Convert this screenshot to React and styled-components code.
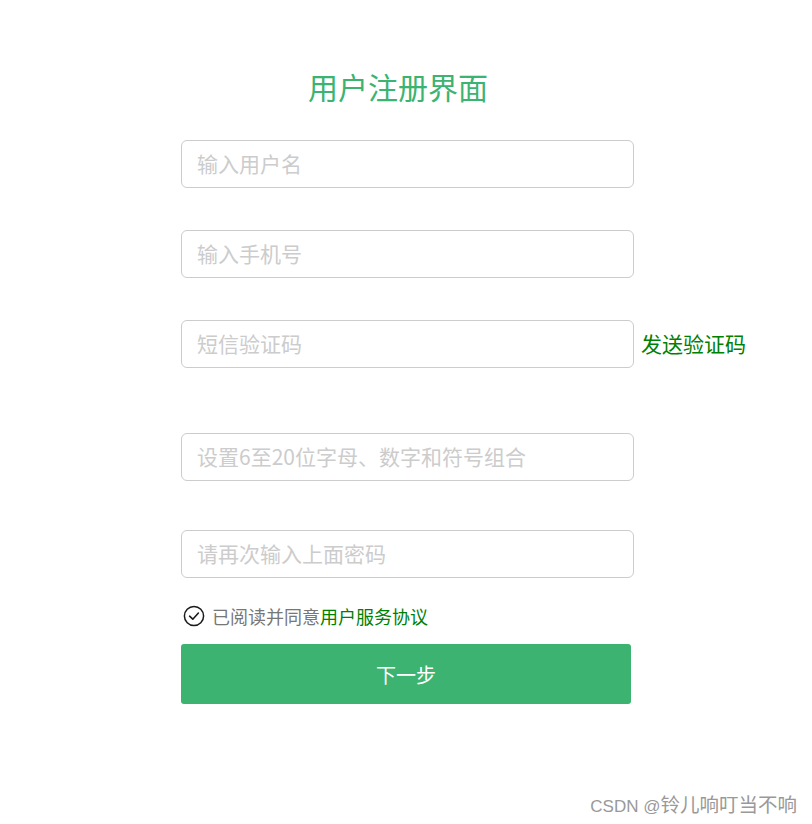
import React from "react";
import styled, { createGlobalStyle } from "styled-components";

const Global = createGlobalStyle`
  html, body { margin: 0; padding: 0; background: #fff; }
  body { font-family: "Noto Sans CJK SC", "Liberation Sans", sans-serif; }
  * { box-sizing: border-box; }
`;

const Page = styled.div`
  position: relative;
  width: 812px;
  height: 824px;
  padding-left: 181px;
  padding-top: 71px;
`;

const Form = styled.div`
  display: flex;
  flex-direction: column;
  width: 453px;
`;

const Title = styled.h1`
  margin: 0 19px 0 0;
  font-size: 30px;
  line-height: 30px;
  font-weight: 400;
  color: #3cb371;
  text-align: center;
`;

const Row = styled.div`
  display: flex;
  align-items: center;
  gap: 7px;
  margin-top: ${(p) => p.$gap}px;
  width: 600px;
`;

const Input = styled.input`
  flex: none;
  width: 453px;
  height: 48px;
  border: 1px solid #cccccc;
  border-radius: 6px;
  padding: 0 15px 3px;
  font-family: inherit;
  font-size: 21px;
  color: #333;
  outline: none;
  &::placeholder { color: #cccccc; }
`;

const SendLink = styled.a`
  font-size: 21px;
  color: #008000;
  text-decoration: none;
  white-space: nowrap;
  line-height: 24px;
  margin-bottom: 2px;
`;

const Agree = styled.label`
  display: flex;
  align-items: center;
  gap: 7px;
  margin-top: 26px;
  padding-left: 2px;
  height: 24px;
  font-size: 18px;
  color: #777;
`;

const AgreeLink = styled.span`
  color: #008000;
`;

const Button = styled.button`
  margin-top: 16px;
  width: 450px;
  height: 60px;
  border: none;
  border-radius: 3px;
  background: #3cb371;
  color: #fff;
  font-family: inherit;
  font-size: 20px;
`;

const Watermark = styled.div`
  position: absolute;
  right: 15px;
  bottom: 6px;
  display: flex;
  align-items: baseline;
  color: #999;
  white-space: pre;
`;

const WmLatin = styled.span`
  font-family: "Liberation Sans", sans-serif;
  font-size: 17px;
`;

const WmCjk = styled.span`
  font-family: "Noto Sans CJK SC", sans-serif;
  font-size: 19.5px;
`;

const CheckIcon = () => (
  <svg width="22" height="22" viewBox="0 0 22 22">
    <circle cx="11" cy="11" r="9.6" fill="none" stroke="#1a1a1a" strokeWidth="1.5" />
    <path d="M6.6 11.2 L9.8 14.2 L15.4 8" fill="none" stroke="#1a1a1a" strokeWidth="1.6" strokeLinecap="round" strokeLinejoin="round" />
  </svg>
);

export default function App() {
  return (
    <Page>
      <Global />
      <Form>
        <Title>用户注册界面</Title>
        <Row $gap={39}><Input placeholder="输入用户名" /></Row>
        <Row $gap={42}><Input placeholder="输入手机号" /></Row>
        <Row $gap={42}>
          <Input placeholder="短信验证码" />
          <SendLink href="#">发送验证码</SendLink>
        </Row>
        <Row $gap={65}><Input type="password" placeholder="设置6至20位字母、数字和符号组合" /></Row>
        <Row $gap={49}><Input type="password" placeholder="请再次输入上面密码" /></Row>
        <Agree>
          <CheckIcon />
          <span>已阅读并同意<AgreeLink>用户服务协议</AgreeLink></span>
        </Agree>
        <Button>下一步</Button>
      </Form>
      <Watermark>
        <WmLatin>CSDN @</WmLatin>
        <WmCjk>铃儿响叮当不响</WmCjk>
      </Watermark>
    </Page>
  );
}
